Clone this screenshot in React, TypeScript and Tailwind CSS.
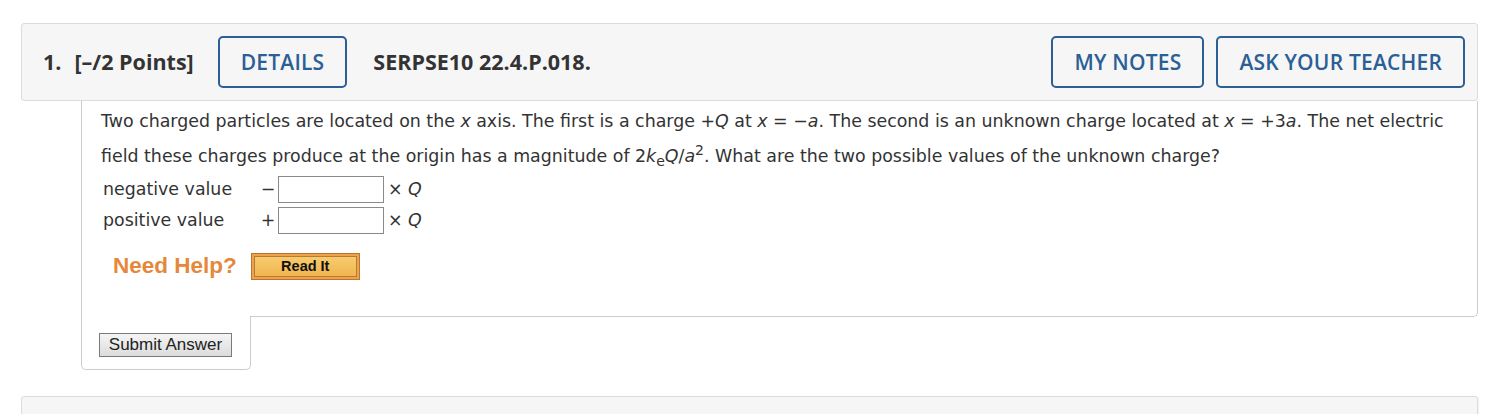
import type { ReactNode } from "react";

const BODY_FONT = "font-['DejaVu_Sans',Verdana,sans-serif]";

function OutlineButton({ children }: { children: ReactNode }) {
  return (
    <button className="h-[52px] px-[21px] border-2 border-[#2b5f95] rounded-[5px] text-[#2b5f95] text-[21px] font-semibold leading-none tracking-[0.2px]">
      {children}
    </button>
  );
}

function I({ children }: { children: ReactNode }) {
  return <i className="italic">{children}</i>;
}

function AnswerRow({ label, sign }: { label: string; sign: string }) {
  return (
    <div className="flex items-center h-[31px] pl-[2px]">
      <span className="w-[157px]">{label}</span>
      <span className="w-[16px] text-center">{sign}</span>
      <input
        type="text"
        className="ml-[2px] w-[106px] h-[27px] border border-[#8a8a8a] bg-white outline-none"
      />
      <span className="ml-[4px]">
        × <I>Q</I>
      </span>
    </div>
  );
}

export default function App() {
  return (
    <div className="min-h-[414px] bg-white pt-[23px] pl-[21px] pr-[12px] font-['Open_Sans',sans-serif]">
      {/* Question header */}
      <div className="h-[78px] flex items-center bg-[#f6f6f6] border border-[#dcdcdc] rounded-[3px] pl-[21px] pr-[12px] text-[#333] text-[21.5px] font-bold">
        <span>1.</span>
        <span className="ml-[13px]">[–/2 Points]</span>
        <div className="ml-[24px]">
          <OutlineButton>DETAILS</OutlineButton>
        </div>
        <span className="ml-[26px]">SERPSE10 22.4.P.018.</span>
        <div className="ml-auto flex gap-[12px]">
          <OutlineButton>MY NOTES</OutlineButton>
          <OutlineButton>ASK YOUR TEACHER</OutlineButton>
        </div>
      </div>

      {/* Question body */}
      <div className="ml-[60px]">
        <div
          className={`border-x border-b border-[#cccccc] rounded-br-[5px] pl-[19px] pt-[3px] pb-[36px] text-[#333] text-[17.4px] ${BODY_FONT}`}
        >
          <p className="leading-[35px] whitespace-nowrap">
            Two charged particles are located on the <I>x</I> axis. The first is a charge +<I>Q</I> at <I>x</I> = −<I>a</I>. The
            second is an unknown charge located at <I>x</I> = +3<I>a</I>. The net electric
            <br />
            field these charges produce at the origin has a magnitude of 2<I>k</I>
            <sub className="text-[14px] leading-none">e</sub>
            <I>Q</I>/<I>a</I>
            <sup className="text-[14px] leading-none">2</sup>. What are the two possible values of the unknown charge?
          </p>
          <AnswerRow label="negative value" sign="−" />
          <AnswerRow label="positive value" sign="+" />

          <div className="flex items-center mt-[17px] pl-[12px]">
            <span className="font-['Liberation_Sans',Arial,sans-serif] font-bold text-[22.5px] text-[#e5883b] leading-none">
              Need Help?
            </span>
            <button className="ml-[14px] w-[109px] h-[27px] border border-[#b87630] bg-[#eea24a] p-[2px]">
              <span className="h-full flex items-center justify-center border border-[#b87a34] bg-gradient-to-b from-[#f7cb6d] to-[#f1b54f] font-['Liberation_Sans',Arial,sans-serif] font-bold text-[14.5px] text-[#111] leading-none">
                Read It
              </span>
            </button>
          </div>
        </div>

        {/* Submit tab */}
        <div className="-mt-px w-[170px] bg-white border-x border-b border-[#cccccc] rounded-b-[5px] pl-[17px] pt-[16px] pb-[12px]">
          <button className="w-[133px] h-[24px] border border-[#7a7a7a] bg-gradient-to-b from-[#f5f5f5] to-[#dcdcdc] font-['Liberation_Sans',Arial,sans-serif] text-[17px] text-[#222] leading-none">
            Submit Answer
          </button>
        </div>
      </div>

      {/* Next question header */}
      <div className="mt-[26px] h-[78px] bg-[#f6f6f6] border border-[#dcdcdc] rounded-[3px] shadow-[1px_1px_2px_rgba(0,0,0,0.06)]" />
    </div>
  );
}
